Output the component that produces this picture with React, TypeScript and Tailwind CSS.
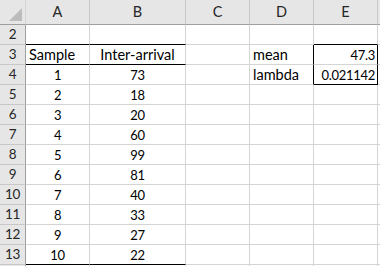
import React from "react";

type Cell = {
  text?: string;
  align?: "left" | "center" | "right";
  num?: boolean;
  bottom?: boolean;
  right?: boolean;
};

const columns = ["A", "B", "C", "D", "E"];

const samples = [73, 18, 20, 60, 99, 81, 40, 33, 27, 22];

// rows of the sheet, keyed by row number
const rows: { n: number; cells: Cell[] }[] = [
  {
    n: 2,
    cells: [{ bottom: true }, { bottom: true }, {}, {}, { bottom: true }],
  },
  {
    n: 3,
    cells: [
      { text: "Sample", align: "left", bottom: true },
      { text: "Inter-arrival", align: "center", bottom: true },
      {},
      { text: "mean", align: "left", right: true },
      { text: "47.3", align: "right", num: true, right: true },
    ],
  },
  ...samples.map((v, i) => ({
    n: i + 4,
    cells: [
      { text: String(i + 1), align: "center" as const, num: true, bottom: i === 9 },
      { text: String(v), align: "center" as const, num: true, bottom: i === 9 },
      {},
      i === 0 ? { text: "lambda", align: "left" as const, right: true } : {},
      i === 0
        ? { text: "0.021142", align: "right" as const, num: true, right: true, bottom: true }
        : {},
    ],
  })),
];

const alignClass = {
  left: "justify-start pl-[3px]",
  center: "justify-center",
  right: "justify-end pr-[2px]",
};

function SheetCell({ cell }: { cell: Cell }) {
  return (
    <div
      className={`flex h-5 items-end pb-[2px] leading-none text-black border-r border-b ${
        cell.num ? "text-[13px] tracking-[-0.3px]" : "text-[14.5px] pb-[1px]"
      } ${cell.bottom ? "border-b-black" : "border-b-[#d4d4d4]"} ${
        cell.right ? "border-r-black" : "border-r-[#d4d4d4]"
      } ${alignClass[cell.align ?? "left"]}`}
    >
      {cell.text}
    </div>
  );
}

function RowHeader({ n }: { n?: number }) {
  return (
    <div className="flex h-5 items-center justify-center border-r border-b border-r-[#9e9e9e] border-b-[#c8c8c8] bg-[#e6e6e6] text-[13.5px] tracking-[-0.3px] text-[#262626]">
      {n}
    </div>
  );
}

export default function App() {
  return (
    <div
      className="h-[266px] w-[380px] overflow-hidden bg-white"
      style={{ fontFamily: "Lato, 'Liberation Sans', sans-serif" }}
    >
      <div className="grid grid-cols-[26px_64px_96px_64px_64px_64px_1fr]">
        {/* select-all corner */}
        <div className="relative h-[25px] border-r border-b border-r-[#d4d4d4] border-b-[#9e9e9e] bg-[#e6e6e6]">
          <svg className="absolute left-[9px] top-[8px]" width="13" height="13" viewBox="0 0 13 13">
            <polygon points="13,0 13,13 0,13" fill="#bcbcbc" />
          </svg>
        </div>
        {columns.map((c) => (
          <div
            key={c}
            className="flex h-[25px] items-center justify-center border-r border-b border-r-[#c8c8c8] border-b-[#9e9e9e] bg-[#e6e6e6] text-[14.5px] text-[#262626]"
          >
            {c}
          </div>
        ))}
        <div className="h-[25px] border-b border-b-[#9e9e9e] bg-[#e6e6e6]" />

        {rows.map((row) => (
          <React.Fragment key={row.n}>
            <RowHeader n={row.n} />
            {row.cells.map((cell, i) => (
              <SheetCell key={i} cell={cell} />
            ))}
            <div className="h-5 border-b border-b-[#d4d4d4]" />
          </React.Fragment>
        ))}

        {/* row 14, only its top edge shows */}
        <RowHeader />
        {columns.map((c) => (
          <SheetCell key={c} cell={{}} />
        ))}
        <div className="h-5" />
      </div>
    </div>
  );
}
